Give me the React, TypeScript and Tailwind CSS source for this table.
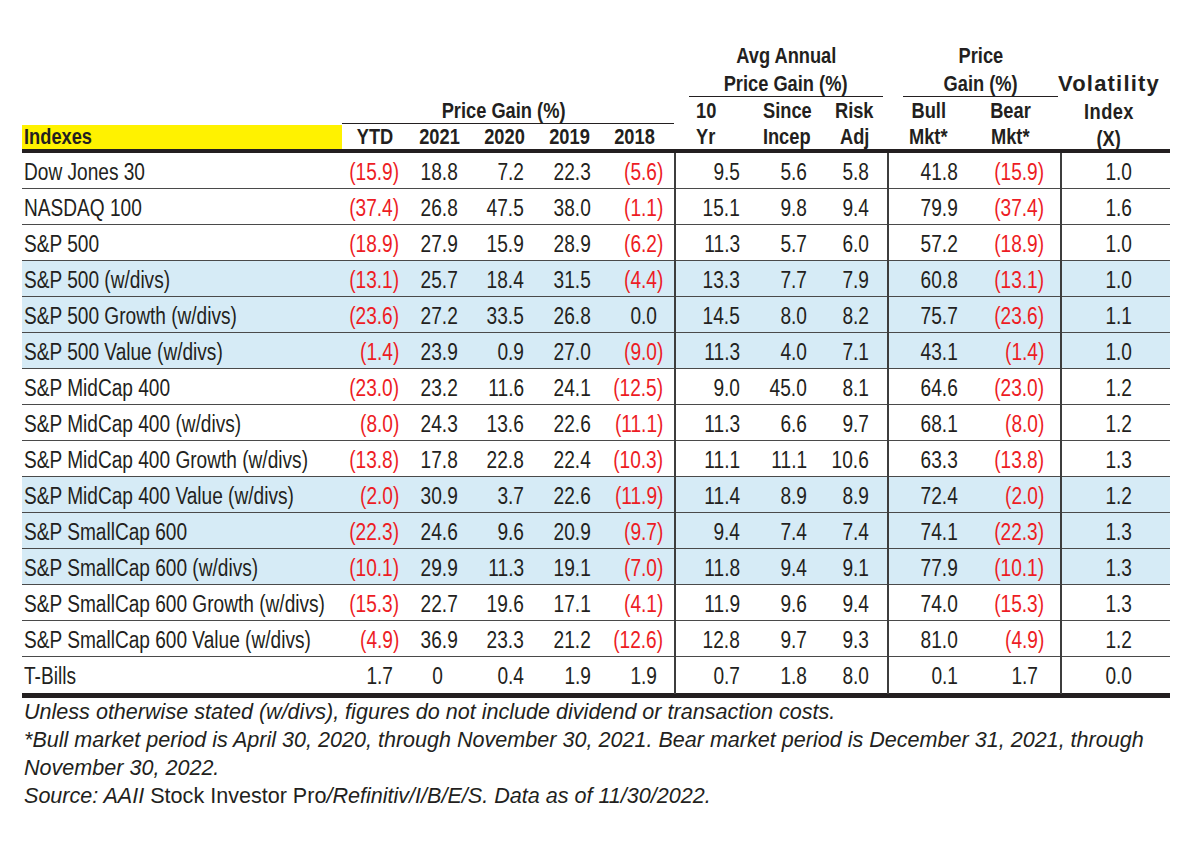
const cols =
  "grid grid-cols-[320px_65px_65px_65px_65px_72px_71px_77px_65px_83px_90px_110px]";

// right padding of each numeric column, so the digits line up like the print table
const padRight = [
  "pr-[14px]",
  "pr-[14px]",
  "pr-[13px]",
  "pr-[11px]",
  "pr-[17px]",
  "pr-[5px]",
  "pr-[15px]",
  "pr-[18px]",
  "pr-[12px]",
  "pr-[22px]",
  "pr-[38px]",
];

// columns that start a new block get a rule on their left
const ruleLeft = [5, 8, 10];

type Row = { name: string; v: string[]; blue?: boolean };

const rows: Row[] = [
  { name: "Dow Jones 30", v: ["(15.9)", "18.8", "7.2", "22.3", "(5.6)", "9.5", "5.6", "5.8", "41.8", "(15.9)", "1.0"] },
  { name: "NASDAQ 100", v: ["(37.4)", "26.8", "47.5", "38.0", "(1.1)", "15.1", "9.8", "9.4", "79.9", "(37.4)", "1.6"] },
  { name: "S&P 500", v: ["(18.9)", "27.9", "15.9", "28.9", "(6.2)", "11.3", "5.7", "6.0", "57.2", "(18.9)", "1.0"] },
  { name: "S&P 500 (w/divs)", blue: true, v: ["(13.1)", "25.7", "18.4", "31.5", "(4.4)", "13.3", "7.7", "7.9", "60.8", "(13.1)", "1.0"] },
  { name: "S&P 500 Growth (w/divs)", blue: true, v: ["(23.6)", "27.2", "33.5", "26.8", "0.0", "14.5", "8.0", "8.2", "75.7", "(23.6)", "1.1"] },
  { name: "S&P 500 Value (w/divs)", blue: true, v: ["(1.4)", "23.9", "0.9", "27.0", "(9.0)", "11.3", "4.0", "7.1", "43.1", "(1.4)", "1.0"] },
  { name: "S&P MidCap 400", v: ["(23.0)", "23.2", "11.6", "24.1", "(12.5)", "9.0", "45.0", "8.1", "64.6", "(23.0)", "1.2"] },
  { name: "S&P MidCap 400 (w/divs)", v: ["(8.0)", "24.3", "13.6", "22.6", "(11.1)", "11.3", "6.6", "9.7", "68.1", "(8.0)", "1.2"] },
  { name: "S&P MidCap 400 Growth (w/divs)", v: ["(13.8)", "17.8", "22.8", "22.4", "(10.3)", "11.1", "11.1", "10.6", "63.3", "(13.8)", "1.3"] },
  { name: "S&P MidCap 400 Value (w/divs)", blue: true, v: ["(2.0)", "30.9", "3.7", "22.6", "(11.9)", "11.4", "8.9", "8.9", "72.4", "(2.0)", "1.2"] },
  { name: "S&P SmallCap 600", blue: true, v: ["(22.3)", "24.6", "9.6", "20.9", "(9.7)", "9.4", "7.4", "7.4", "74.1", "(22.3)", "1.3"] },
  { name: "S&P SmallCap 600 (w/divs)", blue: true, v: ["(10.1)", "29.9", "11.3", "19.1", "(7.0)", "11.8", "9.4", "9.1", "77.9", "(10.1)", "1.3"] },
  { name: "S&P SmallCap 600 Growth (w/divs)", v: ["(15.3)", "22.7", "19.6", "17.1", "(4.1)", "11.9", "9.6", "9.4", "74.0", "(15.3)", "1.3"] },
  { name: "S&P SmallCap 600 Value (w/divs)", v: ["(4.9)", "36.9", "23.3", "21.2", "(12.6)", "12.8", "9.7", "9.3", "81.0", "(4.9)", "1.2"] },
  { name: "T-Bills", v: ["1.7", "0", "0.4", "1.9", "1.9", "0.7", "1.8", "8.0", "0.1", "1.7", "0.0"] },
];

// no narrow face is installed, so Liberation Sans is squeezed to look condensed
const origins = { left: "origin-left", right: "origin-right", center: "origin-center" };
const Sq = ({
  o = "center",
  className = "",
  children,
}: {
  o?: "left" | "right" | "center";
  className?: string;
  children: React.ReactNode;
}) => (
  <span className={`inline-block whitespace-nowrap scale-x-[0.83] ${origins[o]} ${className}`}>{children}</span>
);

const Value = ({ v }: { v: string }) => {
  if (v.startsWith("(")) {
    return (
      <Sq o="right" className="-mr-[6px] text-[#ed1c24]">
        {v}
      </Sq>
    );
  }
  // a bare "0" sits on the units place, as if it had a decimal
  return (
    <Sq o="right" className={v === "0" ? "mr-[15px]" : ""}>
      {v}
    </Sq>
  );
};

const Head = ({ className = "", children }: { className?: string; children: React.ReactNode }) => (
  <div className={`flex items-center justify-center ${className}`}>
    <Sq>{children}</Sq>
  </div>
);

const Note = ({ children }: { children: React.ReactNode }) => (
  <p>
    <span className="inline-block origin-left scale-x-[0.98] whitespace-nowrap">{children}</span>
  </p>
);

export default function App() {
  return (
    <div className="min-h-[848px] bg-white pl-[22px] pt-[42px] text-[#231f20] font-['Liberation_Sans','Arial',sans-serif]">
      <div className="w-[1148px]">
        {/* header */}
        <div className={`${cols} grid-rows-[28px_28px_26px_25px] text-[22px] font-bold leading-[28px]`}>
          <div className="col-start-7 col-span-3 row-start-1 row-span-2 ml-[15px] mr-[4px] mb-[1px] flex flex-col items-center border-b-[1.5px] border-[#231f20]">
            <Sq>Avg Annual</Sq>
            <Sq>Price Gain (%)</Sq>
          </div>
          <div className="col-start-10 col-span-2 row-start-1 row-span-2 ml-[16px] mr-[2px] mb-[1px] flex flex-col items-center border-b-[1.5px] border-[#231f20]">
            <Sq>Price</Sq>
            <Sq>Gain (%)</Sq>
          </div>
          <div className="col-start-12 row-start-2 row-span-3 flex flex-col items-center pr-[12px]">
            <span className="inline-block whitespace-nowrap tracking-[1.2px]">Volatility</span>
            <Sq className="tracking-[0.5px]">Index</Sq>
            <Sq className="leading-[26px]">(X)</Sq>
          </div>

          <Head className="col-start-2 col-span-5 row-start-3 pr-[8px] border-b-[1.5px] border-[#231f20]">
            Price Gain (%)
          </Head>
          <Head className="col-start-7 row-start-3 pr-[7px]">10</Head>
          <Head className="col-start-8 row-start-3 pl-[7px]">Since</Head>
          <Head className="col-start-9 row-start-3">Risk</Head>
          <Head className="col-start-10 row-start-3">Bull</Head>
          <Head className="col-start-11 row-start-3 pr-[10px]">Bear</Head>

          <div className="col-start-1 row-start-4 mt-[1px] flex items-center bg-[#fff200] pl-[2px]">
            <Sq o="left">Indexes</Sq>
          </div>
          <Head className="col-start-2 row-start-4">YTD</Head>
          <Head className="col-start-3 row-start-4">2021</Head>
          <Head className="col-start-4 row-start-4">2020</Head>
          <Head className="col-start-5 row-start-4">2019</Head>
          <Head className="col-start-6 row-start-4 pr-[8px]">2018</Head>
          <Head className="col-start-7 row-start-4 pr-[7px]">Yr</Head>
          <Head className="col-start-8 row-start-4 pl-[7px]">Incep</Head>
          <Head className="col-start-9 row-start-4">Adj</Head>
          <Head className="col-start-10 row-start-4">Mkt*</Head>
          <Head className="col-start-11 row-start-4 pr-[10px]">Mkt*</Head>
        </div>

        {/* body */}
        <div className="border-y-[4px] border-b-[5px] border-[#231f20]">
          {rows.map((r, i) => (
            <div
              key={r.name}
              className={`${cols} h-[36px] text-[23px] ${r.blue ? "bg-[#d6ebf6]" : ""} ${
                i < rows.length - 1 ? "border-b border-[#4a4a4a]" : ""
              }`}
            >
              <div className="flex items-center pl-[2px] pt-[2px]">
                <Sq o="left">{r.name}</Sq>
              </div>
              {r.v.map((v, j) => (
                <div
                  key={j}
                  className={`flex items-center justify-end pt-[2px] ${padRight[j]} ${
                    ruleLeft.includes(j) ? "border-l-2 border-[#3d3d3d]" : ""
                  }`}
                >
                  <Value v={v} />
                </div>
              ))}
            </div>
          ))}
        </div>

        {/* notes */}
        <div className="pl-[2px] text-[22px] italic leading-[28px]">
          <Note>Unless otherwise stated (w/divs), figures do not include dividend or transaction costs.</Note>
          <Note>
            *Bull market period is April 30, 2020, through November 30, 2021. Bear market period is December 31, 2021, through
          </Note>
          <Note>November 30, 2022.</Note>
          <Note>
            Source: AAII <span className="not-italic">Stock Investor Pro</span>/Refinitiv/I/B/E/S. Data as of 11/30/2022.
          </Note>
        </div>
      </div>
    </div>
  );
}
